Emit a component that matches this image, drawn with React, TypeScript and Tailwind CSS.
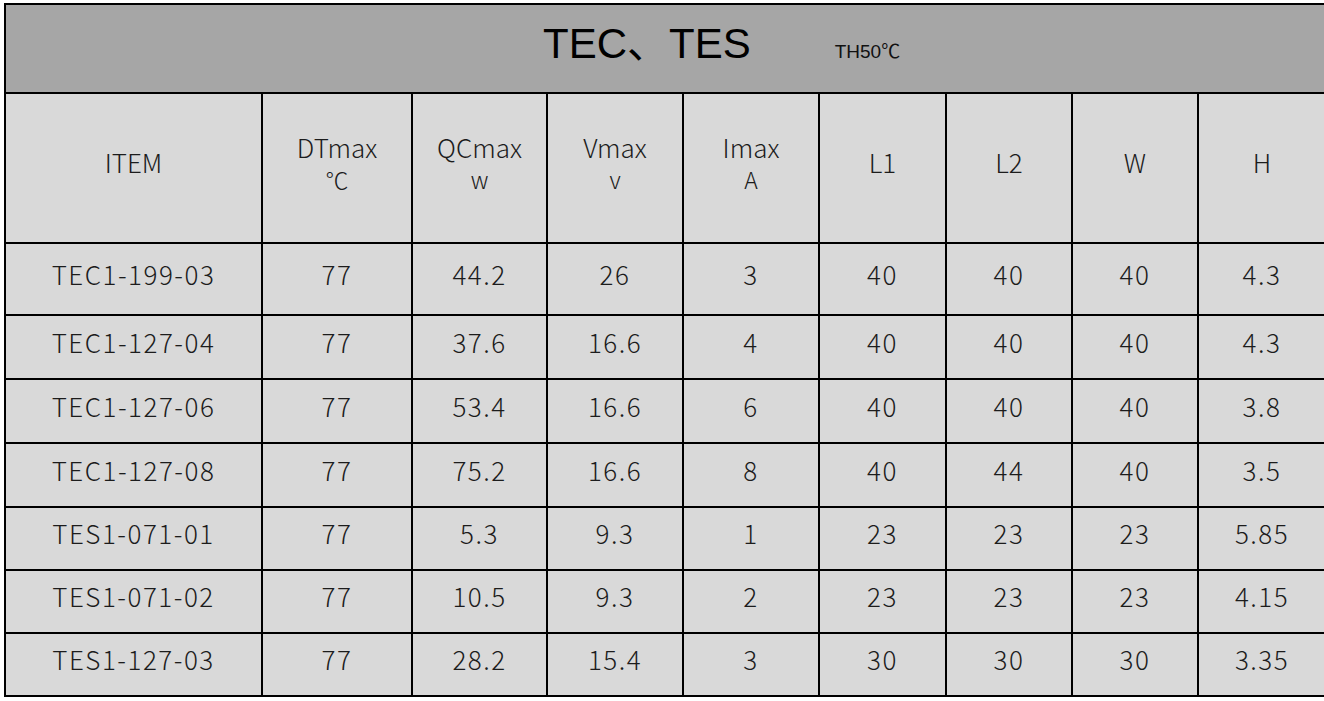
const headers: { top: string; bottom?: string }[] = [
  { top: "ITEM" },
  { top: "DTmax", bottom: "℃" },
  { top: "QCmax", bottom: "w" },
  { top: "Vmax", bottom: "v" },
  { top: "Imax", bottom: "A" },
  { top: "L1" },
  { top: "L2" },
  { top: "W" },
  { top: "H" },
];

const rows: string[][] = [
  ["TEC1-199-03", "77", "44.2", "26", "3", "40", "40", "40", "4.3"],
  ["TEC1-127-04", "77", "37.6", "16.6", "4", "40", "40", "40", "4.3"],
  ["TEC1-127-06", "77", "53.4", "16.6", "6", "40", "40", "40", "3.8"],
  ["TEC1-127-08", "77", "75.2", "16.6", "8", "40", "44", "40", "3.5"],
  ["TES1-071-01", "77", "5.3", "9.3", "1", "23", "23", "23", "5.85"],
  ["TES1-071-02", "77", "10.5", "9.3", "2", "23", "23", "23", "4.15"],
  ["TES1-127-03", "77", "28.2", "15.4", "3", "30", "30", "30", "3.35"],
];

const cjk = "font-['Noto_Sans_CJK_SC',sans-serif]";

function App() {
  return (
    <div className="w-full min-h-screen bg-white overflow-hidden pt-[3px] pl-[4px]">
      <div className="grid w-max gap-[2px] bg-black p-[2px] grid-cols-[255px_148px_133px_134px_134px_125px_124px_124px_126px] grid-rows-[87px_148px_70px_62px_62px_62px_61px_61px_61px]">
        <div className="col-span-9 bg-[#a6a6a6] flex items-baseline pl-[537px] pt-[14px] text-black font-['Liberation_Sans','Noto_Sans_CJK_SC',sans-serif]">
          <span className="text-[42px] leading-[50px]">TEC、TES</span>
          <span className="text-[19px] ml-[84px] text-[#111]">
            TH50<span className={cjk}>℃</span>
          </span>
        </div>

        {headers.map((h) => (
          <div
            key={h.top}
            className={`bg-[#d9d9d9] flex flex-col items-center justify-center pb-[12px] text-[#1c1c1c] ${cjk}`}
          >
            <span className="text-[26px] leading-[34px] font-light">{h.top}</span>
            {h.bottom && (
              <span className="text-[23px] leading-[30px] font-light">{h.bottom}</span>
            )}
          </div>
        ))}

        {rows.map((row, i) =>
          row.map((cell, j) => (
            <div
              key={`${i}-${j}`}
              className={`bg-[#d9d9d9] flex items-center justify-center pb-[12px] text-[26px] tracking-[1.5px] text-[#1c1c1c] font-light ${cjk}`}
            >
              {cell}
            </div>
          ))
        )}
      </div>
    </div>
  );
}

export default App;
